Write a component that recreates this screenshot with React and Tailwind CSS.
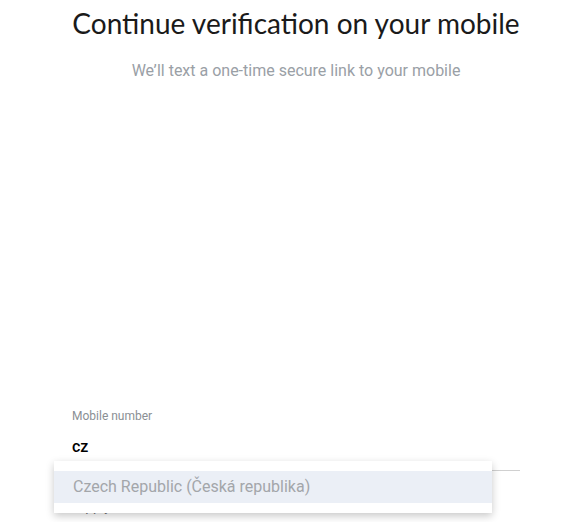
import React from "react";

export default function App() {
  return (
    <div className="w-[574px] h-[522px] bg-white overflow-hidden relative">
      <div className="ml-[72px] w-[448px] flex flex-col items-center">
        <h1 className="mt-[3px] text-[28px] leading-[40px] text-[#1a1a1a] font-normal whitespace-nowrap" style={{ fontFamily: "Lato, 'Noto Sans', sans-serif" }}>
          Continue verification on your mobile
        </h1>
        <p className="mt-[18px] text-[16px] leading-[20px] text-[#9aa0a6]" style={{ fontFamily: "Roboto, sans-serif" }}>
          We’ll text a one-time secure link to your mobile
        </p>
      </div>
      <div className="ml-[72px] w-[448px] mt-[328px] relative" style={{ fontFamily: "Roboto, sans-serif" }}>
        <div className="text-[12px] leading-[14px] text-[#8a8f94]">Mobile number</div>
        <div className="mt-[12px] text-[16px] leading-[24px] font-medium text-black">cz</div>
        <div className="mt-[11px] h-px bg-[#d0d0d0]"></div>
        <div className="mt-[26px] pl-[4px] text-[14px] leading-[18px] text-[#777]">Apply</div>
        <div className="absolute left-[-18px] top-[52px] w-[438px] bg-white shadow-[0_3px_8px_rgba(0,0,0,0.22)] py-[10px]">
          <div className="h-[32px] bg-[#ebeff6] flex items-center pl-[19px] text-[16px] text-[#a3a6aa]">
            Czech Republic (Česká republika)
          </div>
        </div>
      </div>
    </div>
  );
}
